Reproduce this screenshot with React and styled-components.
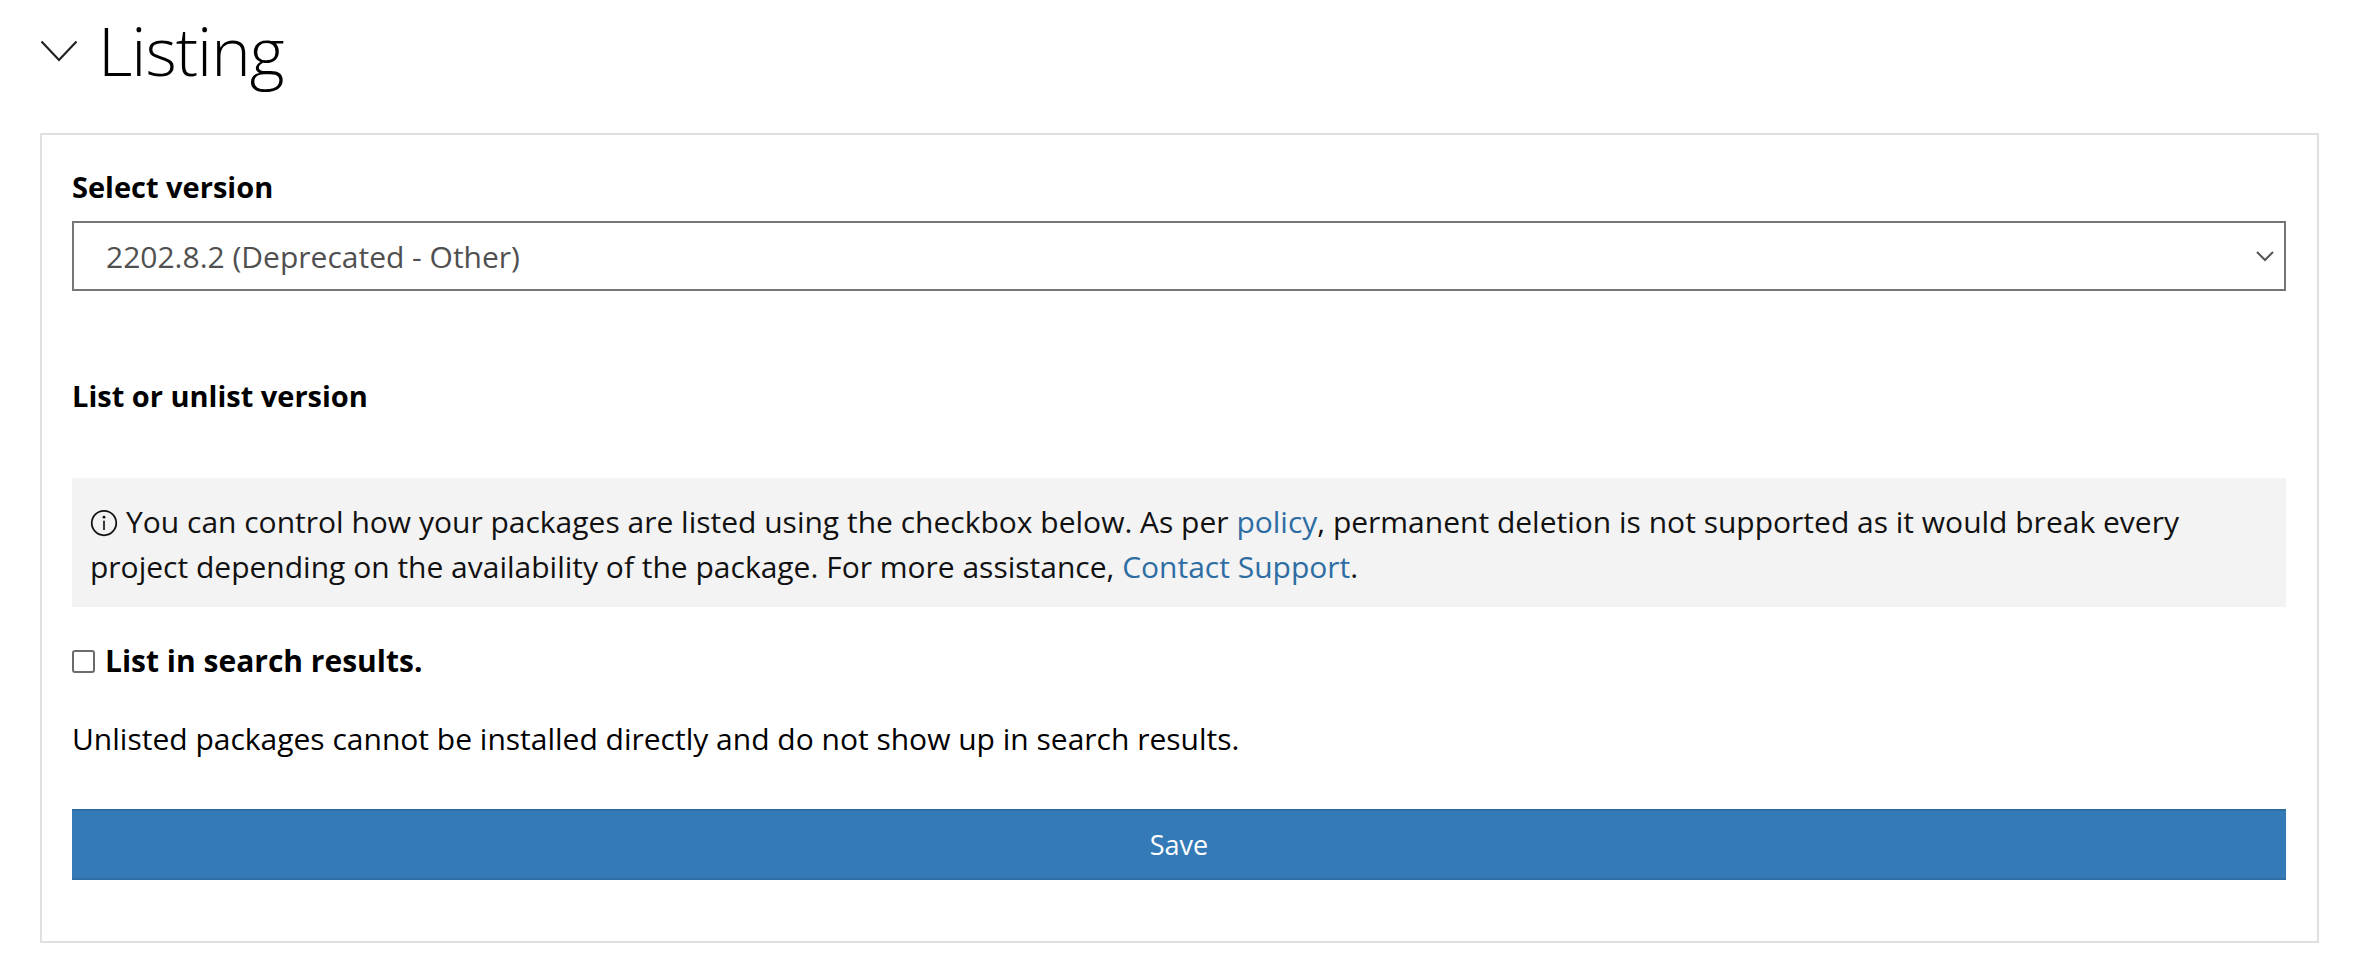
import React from "react";
import styled, { createGlobalStyle } from "styled-components";

const Global = createGlobalStyle`
  body { margin: 0; background: #fff; font-family: "Open Sans", "Noto Sans", sans-serif; color: #000; }
`;

const Page = styled.div`
  width: 2354px;
  padding: 0 35px 0 40px;
  box-sizing: border-box;
`;

const Header = styled.div`
  display: flex;
  align-items: flex-start;
  height: 133px;
  padding-top: 17px;
  box-sizing: border-box;
  gap: 20px;
`;

const Title = styled.h1`
  margin: 0;
  font-size: 67px;
  line-height: 1;
  font-weight: 300;
  letter-spacing: -1px;
`;

const Chevron = styled.svg`
  margin-top: 23px;
`;

const Card = styled.div`
  border: 2px solid #e0e0e0;
  padding: 32px 31px 61px 30px;
`;

const Label = styled.div`
  font-size: 29px;
  line-height: 40px;
  font-weight: 700;
  margin-top: ${(p) => p.$mt || 0}px;
`;

const SelectBox = styled.div`
  margin-top: 14px;
  height: 70px;
  box-sizing: border-box;
  border: 2px solid #767676;
  display: flex;
  align-items: center;
  justify-content: space-between;
  padding: 0 10px 0 32px;
  font-size: 30px;
  color: #505050;
`;

const Info = styled.div`
  margin-top: 62px;
  background: #f3f3f3;
  padding: 21px 14px 18px 18px;
  font-size: 30px;
  line-height: 45px;
  color: #111;
`;

const Link = styled.a`
  color: #2e6da4;
  text-decoration: none;
`;

const CheckRow = styled.label`
  margin-top: 34px;
  display: flex;
  align-items: center;
  gap: 10px;
  font-size: 30px;
  line-height: 40px;
  font-weight: 700;
`;

const Box = styled.span`
  width: 23px;
  height: 23px;
  box-sizing: border-box;
  border: 2px solid #6b6b6b;
  border-radius: 3px;
  display: inline-block;
`;

const Text = styled.p`
  margin: 38px 0 0;
  font-size: 30px;
  line-height: 40px;
`;

const Button = styled.button`
  margin-top: 50px;
  width: 100%;
  height: 71px;
  background: #337ab7;
  border: none;
  border-top: 2px solid #2e6da4;
  border-bottom: 2px solid #2e6da4;
  color: #fff;
  font-family: inherit;
  font-size: 27px;
`;

export default function App() {
  return (
    <Page>
      <Global />
      <Header>
        <Chevron width="38" height="22" viewBox="0 0 38 22">
          <path d="M1.5 1.5 L19 20 L36.5 1.5" fill="none" stroke="#222" strokeWidth="2.2" />
        </Chevron>
        <Title>Listing</Title>
      </Header>
      <Card>
        <Label>Select version</Label>
        <SelectBox>
          <span>2202.8.2 (Deprecated - Other)</span>
          <svg width="18" height="11" viewBox="0 0 18 11">
            <path d="M1 1 L9 9 L17 1" fill="none" stroke="#555" strokeWidth="2" />
          </svg>
        </SelectBox>
        <Label $mt={85}>List or unlist version</Label>
        <Info>
          <svg width="28" height="28" viewBox="0 0 24 24" style={{ verticalAlign: "-4px", marginRight: 8 }}>
            <circle cx="12" cy="12" r="10.5" fill="none" stroke="#111" strokeWidth="1.5" />
            <circle cx="12" cy="7" r="1.2" fill="#111" />
            <rect x="11.3" y="10" width="1.4" height="8" fill="#111" />
          </svg>
          You can control how your packages are listed using the checkbox below. As per <Link href="#">policy</Link>, permanent deletion is not supported as it would break every
          <br />
          project depending on the availability of the package. For more assistance, <Link href="#">Contact Support</Link>.
        </Info>
        <CheckRow>
          <Box />
          List in search results.
        </CheckRow>
        <Text>Unlisted packages cannot be installed directly and do not show up in search results.</Text>
        <Button>Save</Button>
      </Card>
    </Page>
  );
}
